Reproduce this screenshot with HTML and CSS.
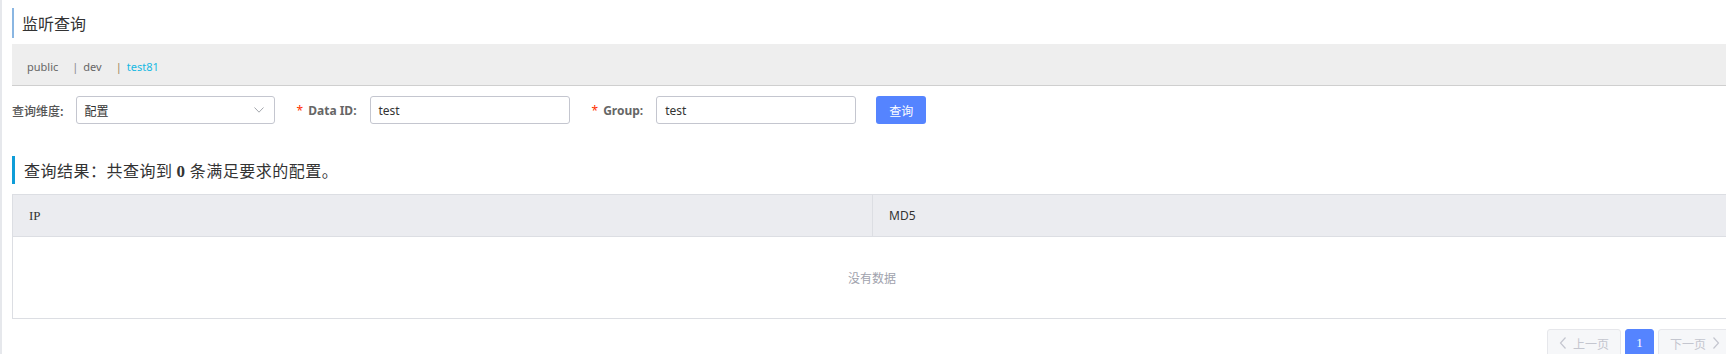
FILE: index.html
```html
<!DOCTYPE html>
<html lang="zh-CN">
<head>
<meta charset="utf-8">
<title>监听查询</title>
<link rel="stylesheet" href="styles.css">
</head>
<body>
<div class="edge"></div>
<div class="page">
  <h1 class="page-title">监听查询</h1>
  <div class="ns-bar">
    <span class="ns-item">public</span>
    <span class="ns-item"><span class="sep">|</span>dev</span>
    <span class="ns-item active"><span class="sep">|</span>test81</span>
  </div>

  <form class="query-form">
    <div class="form-item">
      <label class="form-label plain">查询维度:</label>
      <div class="select">
        <span class="select-value">配置</span>
        <svg class="select-arrow" width="10" height="6" viewBox="0 0 10 6"><polyline points="0.5,0.5 5,5.2 9.5,0.5" fill="none" stroke="#a3a6ad" stroke-width="1"/></svg>
      </div>
    </div>
    <div class="form-item">
      <label class="form-label"><span class="req">*</span>Data ID:</label>
      <div class="input">test</div>
    </div>
    <div class="form-item">
      <label class="form-label"><span class="req">*</span>Group:</label>
      <div class="input">test</div>
    </div>
    <button type="button" class="btn-primary">查询</button>
  </form>

  <h2 class="result-title">查询结果：共查询到 <strong class="count">0</strong> 条满足要求的配置。</h2>

  <div class="table">
    <div class="thead">
      <div class="th ip">IP</div>
      <div class="th">MD5</div>
    </div>
    <div class="tbody">
      <div class="empty">没有数据</div>
    </div>
  </div>

  <div class="pagination">
    <button type="button" class="pg-btn pg-nav">
      <svg width="8" height="12" viewBox="0 0 8 12"><polyline points="6.5,0.5 1.5,6 6.5,11.5" fill="none" stroke="#c4c6cf" stroke-width="1.2"/></svg>
      上一页
    </button>
    <button type="button" class="pg-btn pg-current">1</button>
    <button type="button" class="pg-btn pg-nav">
      下一页
      <svg width="8" height="12" viewBox="0 0 8 12"><polyline points="1.5,0.5 6.5,6 1.5,11.5" fill="none" stroke="#c4c6cf" stroke-width="1.2"/></svg>
    </button>
  </div>
</div>
</body>
</html>
```

FILE: styles.css
```css
html, body {
  margin: 0;
  padding: 0;
  background: #fff;
  overflow: hidden;
  height: 354px;
}
body {
  font-family: "Noto Sans", "Noto Sans CJK SC", sans-serif;
  font-size: 12px;
  color: #333;
  display: flex;
}
.edge {
  width: 2px;
  flex: none;
  background: #e6e8ec;
  height: 354px;
}
.page {
  flex: none;
  width: 1720px;
  margin-left: 10px;
}
.page-title {
  margin: 8px 0 0;
  height: 30px;
  line-height: 30px;
  border-left: 2px solid #8ab6e2;
  padding-left: 8px;
  font-family: "Noto Sans CJK SC", sans-serif;
  font-size: 16px;
  font-weight: normal;
  color: #333;
}
.ns-bar {
  margin-top: 6px;
  background: #eeeeee;
  border-bottom: 1px solid #cfcfcf;
  display: flex;
  align-items: center;
  padding: 4px 0 0 15px;
  box-sizing: content-box;
  height: 37px;
}
.ns-item {
  font-family: "Noto Sans", "Noto Sans CJK SC", sans-serif;
  font-size: 11px;
  color: #666;
  margin-right: 14px;
}
.ns-item .sep {
  color: #888;
  margin-right: 5px;
}
.ns-item.active {
  color: #16b9e3;
}
.ns-item.active .sep {
  color: #a0855a;
}
.query-form {
  margin-top: 10px;
  display: flex;
  align-items: center;
  height: 28px;
}
.form-item {
  display: flex;
  align-items: center;
  margin-right: 20px;
}
.form-label {
  font-family: "Noto Sans", "Noto Sans CJK SC", sans-serif;
  font-size: 12px;
  font-weight: bold;
  color: #666;
  margin-right: 13px;
  white-space: nowrap;
}
.form-label.plain {
  font-family: "Noto Sans CJK SC", sans-serif;
  font-weight: 500;
  color: #555;
  margin-right: 12px;
}
.req {
  color: #ff3000;
  font-weight: normal;
  margin: 0 5px 0 2px;
}
.select, .input {
  box-sizing: border-box;
  height: 28px;
  border: 1px solid #c4c6cf;
  border-radius: 3px;
  background: #fff;
  display: flex;
  align-items: center;
  padding: 0 8px;
  font-size: 12px;
  color: #333;
}
.select {
  width: 199px;
  justify-content: space-between;
  padding-right: 10px;
  font-family: "Noto Sans CJK SC", sans-serif;
}
.input {
  width: 200px;
}
.btn-primary {
  box-sizing: border-box;
  height: 28px;
  width: 50px;
  border: none;
  border-radius: 3px;
  background: #5584ff;
  color: #fff;
  font-family: "Noto Sans CJK SC", sans-serif;
  font-size: 12px;
  padding: 0;
}
.result-title {
  margin: 32px 0 0;
  height: 28px;
  line-height: 28px;
  border-left: 3px solid #0e9dd8;
  padding-left: 9px;
  font-family: "Noto Sans CJK SC", sans-serif;
  font-size: 16px;
  letter-spacing: 0.5px;
  font-weight: normal;
  color: #333;
}
.count {
  font-family: "Liberation Serif", serif;
  font-weight: bold;
  font-size: 17px;
}
.table {
  margin-top: 10px;
  border: 1px solid #dcdee3;
}
.thead {
  display: grid;
  grid-template-columns: 1fr 1fr;
  background: #ebecf0;
  border-bottom: 1px solid #dcdee3;
  height: 41px;
}
.th {
  display: flex;
  align-items: center;
  padding-left: 16px;
  font-size: 12px;
  color: #333;
}
.th + .th {
  border-left: 1px solid #dcdee3;
}
.th.ip {
  font-family: "Liberation Serif", serif;
  font-size: 13px;
}
.tbody {
  height: 81px;
  display: flex;
  align-items: center;
  justify-content: center;
}
.empty {
  font-family: "Noto Sans CJK SC", sans-serif;
  font-size: 12px;
  color: #a0a2ad;
}
.pagination {
  margin-top: 10px;
  display: flex;
  justify-content: flex-end;
  gap: 4px;
}
.pg-btn {
  box-sizing: border-box;
  height: 28px;
  border-radius: 3px;
  font-size: 12px;
  padding: 0;
  display: flex;
  align-items: center;
  justify-content: center;
  gap: 6px;
}
.pg-nav {
  width: 74px;
  background: #f6f7f9;
  border: 1px solid #e6e7eb;
  color: #c4c6cf;
  font-family: "Noto Sans CJK SC", sans-serif;
}
.pg-current {
  width: 29px;
  background: #5584ff;
  border: 1px solid #5584ff;
  color: #fff;
  font-family: "Liberation Serif", serif;
  font-size: 13px;
}
```
